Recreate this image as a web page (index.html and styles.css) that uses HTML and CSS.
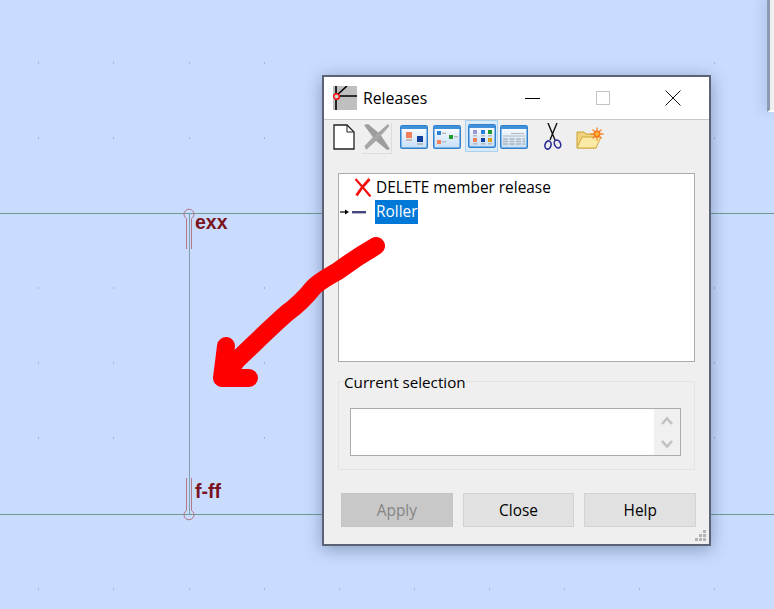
FILE: index.html
```html
<!DOCTYPE html>
<html lang="en">
<head>
<meta charset="utf-8">
<title>Releases</title>
<link rel="stylesheet" href="styles.css">
</head>
<body>
<main class="desktop">
  <svg class="canvas" width="774" height="609" viewBox="0 0 774 609">
    <g class="dots">
      <rect x="38" y="62" width="1" height="2"/><rect x="113" y="62" width="1" height="2"/><rect x="189" y="62" width="1" height="2"/><rect x="264" y="62" width="1" height="2"/><rect x="714" y="62" width="1" height="2"/>
      <rect x="38" y="137" width="1" height="2"/><rect x="113" y="137" width="1" height="2"/><rect x="189" y="137" width="1" height="2"/><rect x="264" y="137" width="1" height="2"/><rect x="714" y="137" width="1" height="2"/>
      <rect x="38" y="287" width="1" height="2"/><rect x="113" y="287" width="1" height="2"/><rect x="264" y="287" width="1" height="2"/><rect x="714" y="287" width="1" height="2"/>
      <rect x="38" y="362" width="1" height="2"/><rect x="113" y="362" width="1" height="2"/><rect x="264" y="362" width="1" height="2"/><rect x="714" y="362" width="1" height="2"/>
      <rect x="38" y="437" width="1" height="2"/><rect x="113" y="437" width="1" height="2"/><rect x="264" y="437" width="1" height="2"/><rect x="714" y="437" width="1" height="2"/>
      <rect x="38" y="588" width="1" height="2"/><rect x="113" y="588" width="1" height="2"/><rect x="189" y="588" width="1" height="2"/><rect x="264" y="588" width="1" height="2"/><rect x="339" y="588" width="1" height="2"/><rect x="414" y="588" width="1" height="2"/><rect x="489" y="588" width="1" height="2"/><rect x="564" y="588" width="1" height="2"/><rect x="639" y="588" width="1" height="2"/><rect x="714" y="588" width="1" height="2"/>
    </g>
    <path class="beam" d="M0 213.5H774M0 514.5H774"/>
    <path class="column" d="M189.5 213V514"/>
    <path class="pin" d="M186.5 249V218.5A5 5 0 1 1 191.5 218.5V249M186.5 478V510.5A5 5 0 1 0 191.5 510.5V478"/>
    <text class="member-label" x="195" y="229">exx</text>
    <text class="member-label" x="195" y="498">f-ff</text>
  </svg>

  <aside class="side-panel"></aside>

  <section class="dialog">
    <header class="titlebar">
      <svg class="app-icon" width="24" height="24" viewBox="0 0 24 24">
        <rect width="24" height="24" fill="#bfbfbf"/>
        <path d="M3 0V24M3 10H24M3 10L14 0" stroke="#000" stroke-width="1.6" fill="none"/>
        <circle cx="3.5" cy="10.5" r="2.8" fill="#d8d8d8" stroke="#f00" stroke-width="1.4"/>
      </svg>
      <h1 class="title">Releases</h1>
      <div class="win-controls">
        <svg class="win-btn" width="16" height="16" viewBox="0 0 16 16"><path d="M0 8.5H15" stroke="#000"/></svg>
        <svg class="win-btn" width="16" height="16" viewBox="0 0 16 16"><rect x="1.5" y="1.5" width="13" height="13" fill="none" stroke="#c4c4c4"/></svg>
        <svg class="win-btn" width="16" height="16" viewBox="0 0 16 16"><path d="M.5 .5L15.5 15.5M15.5 .5L.5 15.5" stroke="#111"/></svg>
      </div>
    </header>

    <nav class="toolbar">
      <svg class="tool tool-new" width="22" height="26" viewBox="0 0 22 26"><path d="M1 1H14L21 8V25H1Z" fill="#fff" stroke="#222" stroke-width="1.3"/><path d="M14 1V8H21" fill="none" stroke="#222"/></svg>
      <span class="tool-delete"><svg width="28" height="28" viewBox="0 0 28 28"><path d="M1 2L5 1L17 11L27 26L24 27L12 17Z" fill="#9d9d9d"/><path d="M25 1L26.5 3L14 17L3 27L1.5 23L10 14Z" fill="#a6a6a6"/></svg></span>
      <svg class="tool tool-v1" width="28" height="24" viewBox="0 0 28 24"><defs><linearGradient id="win" x1="0" x2="0" y1="0" y2="1"><stop offset="0" stop-color="#fdfeff"/><stop offset="1" stop-color="#c5def6"/></linearGradient></defs><rect x=".75" y=".75" width="26.5" height="22.5" rx="1.5" fill="url(#win)" stroke="#2f82cf" stroke-width="1.5"/><rect x="1" y="1" width="26" height="3" fill="#3f8fd9"/><rect x="6" y="7" width="6" height="6" fill="#f4805a"/><rect x="6" y="14" width="6" height="2" fill="#c2b8b0"/><rect x="17" y="11" width="6" height="6" fill="#0f3f9a"/><rect x="17" y="18" width="6" height="2" fill="#b6bcc6"/></svg>
      <svg class="tool tool-v2" width="28" height="24" viewBox="0 0 28 24"><rect x=".75" y=".75" width="26.5" height="22.5" rx="1.5" fill="url(#win)" stroke="#2f82cf" stroke-width="1.5"/><rect x="1" y="1" width="26" height="3" fill="#3f8fd9"/><rect x="4" y="6" width="4" height="4" fill="#2a7fdc"/><rect x="9" y="7.5" width="4" height="1.5" fill="#b4bac2"/><rect x="16" y="10" width="4" height="4" fill="#1f9b2f"/><rect x="21" y="11" width="4" height="1.5" fill="#b4bac2"/><rect x="4" y="15" width="4" height="4" fill="#f4805a"/><rect x="9" y="16" width="4" height="1.5" fill="#b4bac2"/></svg>
      <span class="tool-active"><svg width="28" height="24" viewBox="0 0 28 24"><rect x=".75" y=".75" width="26.5" height="22.5" rx="1.5" fill="url(#win)" stroke="#2f82cf" stroke-width="1.5"/><rect x="1" y="1" width="26" height="3" fill="#3f8fd9"/><rect x="5" y="6" width="4" height="4" fill="#9a96d0"/><rect x="13" y="6" width="4" height="4" fill="#2a7fdc"/><rect x="20" y="6" width="4" height="4" fill="#1f9b2f"/><rect x="5" y="11" width="4" height="1.5" fill="#b4bac2"/><rect x="13" y="11" width="4" height="1.5" fill="#b4bac2"/><rect x="20" y="11" width="4" height="1.5" fill="#b4bac2"/><rect x="5" y="14" width="4" height="4" fill="#f4805a"/><rect x="13" y="14" width="4" height="4" fill="#0f3f9a"/><rect x="20" y="14" width="4" height="4" fill="#d8a020"/><rect x="5" y="19" width="4" height="1.5" fill="#b4bac2"/><rect x="13" y="19" width="4" height="1.5" fill="#b4bac2"/><rect x="20" y="19" width="4" height="1.5" fill="#b4bac2"/></svg></span>
      <svg class="tool tool-v4" width="28" height="24" viewBox="0 0 28 24"><rect x=".75" y=".75" width="26.5" height="22.5" rx="1.5" fill="url(#win)" stroke="#2f82cf" stroke-width="1.5"/><rect x="1" y="1" width="26" height="3" fill="#3f8fd9"/><path d="M11 8.5H24M3 11H25" stroke="#b0b6be" fill="none"/><path d="M3 14H25M3 16.5H25M3 19H25" stroke="#b0b6be" stroke-width="1.4" stroke-dasharray="5 1.5" fill="none"/></svg>
      <svg class="tool tool-cut" width="18" height="27" viewBox="0 0 18 27"><path d="M4 0L11 17M13 0L6 17" stroke="#111" stroke-width="1.4" fill="none"/><ellipse cx="4" cy="22" rx="3" ry="4.2" transform="rotate(15 4 22)" fill="none" stroke="#2d2d9a" stroke-width="1.6"/><ellipse cx="13.5" cy="21" rx="3" ry="4.2" transform="rotate(-25 13.5 21)" fill="none" stroke="#2d2d9a" stroke-width="1.6"/></svg>
      <svg class="tool tool-open" width="28" height="23" viewBox="0 0 28 23"><path d="M1 5H8L10 7H20V21H1Z" fill="#f2d27c" stroke="#c9a033"/><path d="M1 21L6 10H25L20 21Z" fill="#fbe9a6" stroke="#d1a93c"/><circle cx="21" cy="7" r="3.4" fill="#f4571d"/><path d="M21 .5V13.5M14.5 7H27.5M16.5 2.5L25.5 11.5M25.5 2.5L16.5 11.5" stroke="#f7862c" stroke-width="1.3"/><circle cx="21" cy="7" r="2" fill="#ffb52e"/></svg>
    </nav>

    <div class="content">
      <ul class="list">
        <li class="row row-delete">
          <svg width="18" height="19" viewBox="0 0 18 19"><path d="M1.5 1L8.5 9L16.5 18.5" stroke="#f50f0f" stroke-width="2.2" fill="none"/><path d="M15.5 1L8 9.5L2.5 17.5" stroke="#f50f0f" stroke-width="2.8" fill="none"/></svg>
          <span class="row-text">DELETE member release</span>
        </li>
        <li class="row row-roller">
          <svg width="27" height="8" viewBox="0 0 27 8"><path d="M0 4H7" stroke="#000" stroke-width="1.2"/><path d="M5 1.5L9 4L5 6.5Z" fill="#000"/><rect x="12" y="3" width="14" height="2.4" fill="#46457c"/></svg>
          <span class="row-text selected">Roller</span>
        </li>
      </ul>

      <section class="group">
        <h2 class="legend">Current selection</h2>
        <div class="field">
          <div class="field-input"></div>
          <div class="spinner">
            <svg width="12" height="10" viewBox="0 0 12 10"><path d="M1 8L6 2.5L11 8" fill="none" stroke="#c2c2c2" stroke-width="2.6"/></svg>
            <svg width="12" height="10" viewBox="0 0 12 10"><path d="M1 2L6 7.5L11 2" fill="none" stroke="#c2c2c2" stroke-width="2.6"/></svg>
          </div>
        </div>
      </section>

      <div class="actions">
        <button class="btn btn-disabled" type="button" disabled>Apply</button>
        <button class="btn" type="button">Close</button>
        <button class="btn" type="button">Help</button>
      </div>
    </div>

    <svg class="grip" width="12" height="12" viewBox="0 0 12 12"><path d="M8 0h3v3H8zM4 4h3v3H4zM8 4h3v3H8zM0 8h3v3H0zM4 8h3v3H4zM8 8h3v3H8z" fill="#b5b5b5"/></svg>
  </section>

  <svg class="annotation" width="774" height="609" viewBox="0 0 774 609">
    <path class="arrow" d="M376 246C362 254 350 262 338 271C328 277 318 282 313 288C305 298 298 305 287 313C272 326 255 343 237 360L223 378M226 346L222 378H249"/>
  </svg>
</main>
</body>
</html>
```

FILE: styles.css
```css
* {
  box-sizing: border-box;
}

html,
body {
  margin: 0;
  padding: 0;
}

body {
  width: 774px;
  height: 609px;
  overflow: hidden;
  font-family: "Open Sans", "Noto Sans", sans-serif;
  color: #000;
}

.desktop {
  position: relative;
  width: 774px;
  height: 609px;
  overflow: hidden;
  background: #c9dcfe;
}

.canvas,
.annotation {
  position: absolute;
  left: 0;
  top: 0;
}

.annotation {
  pointer-events: none;
}

.dots rect {
  fill: #9fb2ec;
}

.beam {
  fill: none;
  stroke: #6f9a90;
  stroke-width: 1;
}

.column {
  fill: none;
  stroke: #7d9fae;
  stroke-width: 1;
}

.pin {
  fill: none;
  stroke: #b5788a;
  stroke-width: 1;
}

.member-label {
  font-family: "Liberation Sans", Arial, sans-serif;
  font-weight: 700;
  font-size: 19.5px;
  fill: #7b1420;
}

.arrow {
  fill: none;
  stroke: #fe0000;
  stroke-width: 18;
  stroke-linecap: round;
  stroke-linejoin: round;
}

.side-panel {
  position: absolute;
  left: 767px;
  top: -2px;
  width: 12px;
  height: 114px;
  background: #efefef;
  border-left: 3px solid #8c9ab4;
  border-bottom: 2px solid #fff;
  box-shadow: -6px 0 10px rgba(80, 100, 140, 0.14);
}

.dialog {
  position: absolute;
  left: 322px;
  top: 75px;
  width: 389px;
  height: 471px;
  border: 2px solid #5b6375;
  background: #efefef;
  box-shadow: 0 3px 16px rgba(50, 70, 110, 0.45);
  display: flex;
  flex-direction: column;
}

.titlebar {
  display: flex;
  align-items: center;
  height: 43px;
  flex: none;
  padding: 0 0 0 9px;
  background: #fff;
  border-bottom: 1px solid #c9c9c9;
}

.title {
  margin: 0 0 0 6px;
  font-size: 15.8px;
  font-weight: 400;
  flex: 1;
}

.win-controls {
  display: flex;
  align-items: center;
  gap: 54px;
  padding-right: 28px;
}

.toolbar {
  display: flex;
  align-items: flex-start;
  height: 53px;
  flex: none;
}

.tool {
  flex: none;
  display: block;
}

.tool-new {
  margin: 4px 0 0 9px;
}

.tool-delete {
  display: block;
  flex: none;
  width: 30px;
  height: 31px;
  margin: 3px 0 0 7px;
  padding-left: 1px;
  border-right: 1px solid #dcdcdc;
  border-bottom: 1px solid #dcdcdc;
}

.tool-delete svg,
.tool-active svg {
  display: block;
}

.tool-v1 {
  margin: 5px 0 0 8px;
}

.tool-v2 {
  margin: 5px 0 0 5px;
}

.tool-active {
  display: block;
  flex: none;
  width: 33px;
  height: 32px;
  margin: 0 0 0 4px;
  padding: 3px 1px 0 2px;
  background: #dbeaf8;
  border: 1px solid #a9d1f0;
}

.tool-v4 {
  margin: 5px 0 0 2px;
}

.tool-cut {
  margin: 3px 0 0 16px;
}

.tool-open {
  margin: 7px 0 0 14px;
}

.content {
  display: flex;
  flex-direction: column;
  padding: 0 14px 0 14px;
}

.list {
  height: 189px;
  margin: 0;
  padding: 1px 0 0;
  list-style: none;
  background: #fff;
  border: 1px solid #ababab;
}

.row {
  display: flex;
  align-items: center;
  height: 24.5px;
  font-size: 15.4px;
}

.row-delete {
  padding-left: 15px;
}

.row-delete .row-text {
  margin-left: 4px;
}

.row-roller {
  padding-left: 1px;
}

.row-roller .row-text {
  margin-left: 8px;
  padding: 0 1px;
  height: 100%;
  display: flex;
  align-items: center;
}

.selected {
  background: #0078d7;
  color: #fff;
}

.group {
  height: 89px;
  margin-top: 19px;
  padding: 0 13px 0 11px;
  border: 1px solid #e3e3e3;
}

.legend {
  width: max-content;
  height: 20px;
  margin: -10px 0 0 -6px;
  padding: 0;
  font-size: 15.2px;
  line-height: 20px;
  font-weight: 400;
  background: #efefef;
}

.field {
  display: flex;
  height: 48px;
  margin-top: 16px;
  background: #fff;
  border: 1px solid #ababab;
}

.field-input {
  flex: 1;
}

.spinner {
  width: 26px;
  background: #f0f0f0;
  display: flex;
  flex-direction: column;
  align-items: center;
  justify-content: center;
  gap: 13px;
}

.spinner svg {
  display: block;
}

.actions {
  display: flex;
  gap: 10px;
  margin: 23px -1px 0 3px;
}

.btn {
  width: 112px;
  height: 34px;
  padding: 0;
  font: inherit;
  font-size: 15.4px;
  color: #000;
  background: #e1e1e1;
  border: 1px solid #d2d2d2;
}

.btn-disabled {
  background: #c8c8c8;
  border-color: #c4c4c4;
  color: #858585;
}

.grip {
  position: absolute;
  right: 2px;
  bottom: 2px;
}
```
